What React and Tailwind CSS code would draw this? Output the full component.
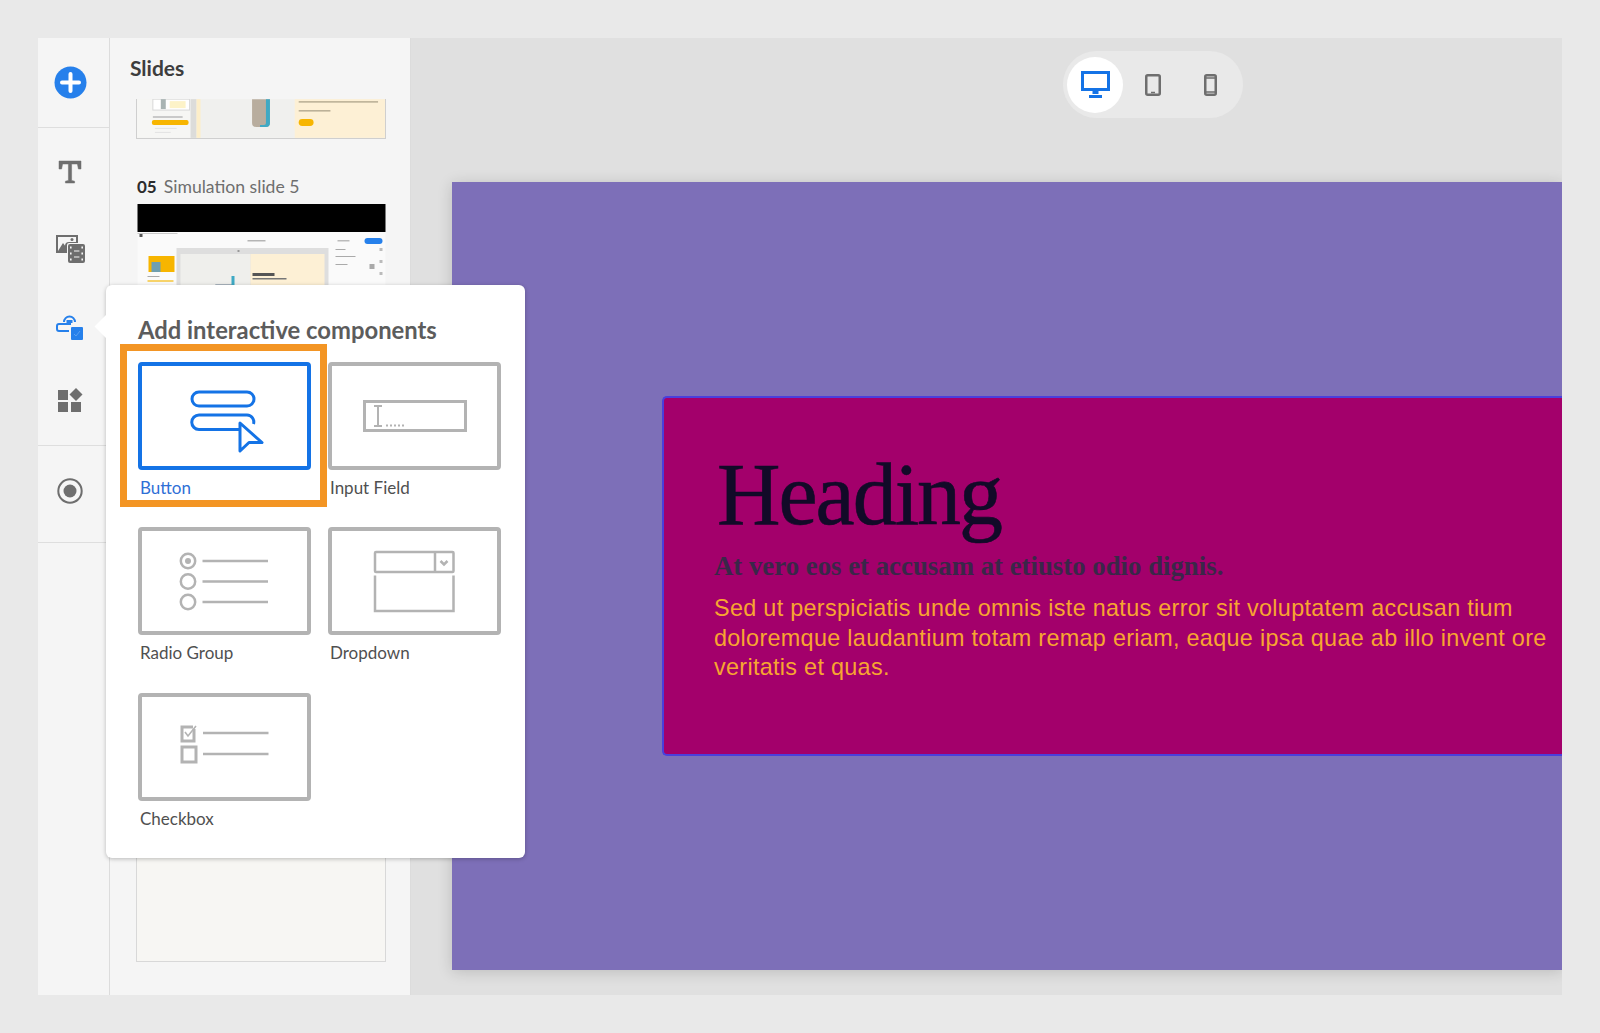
// Interactive components picker over the slide editor

import { useState } from 'react'

const uiFont = 'font-["Lato","Noto_Sans",sans-serif]'

function Thumb1() {
  return (
    <svg viewBox="0 0 250 39" className="block w-full h-full">
      <rect width="250" height="39" fill="#f0f0ee" />
      <rect width="54" height="39" fill="#f6f6f4" />
      <rect x="54" width="6" height="39" fill="#dcdcda" />
      <rect x="60" width="4" height="39" fill="#fdeec9" />
      <rect x="159" width="91" height="39" fill="#fdf0d5" />
      <rect x="16" y="0" width="37" height="11" fill="#fff" stroke="#d8d8d8" />
      <rect x="24" y="0" width="5" height="10" fill="#a9b4b4" />
      <rect x="33" y="2" width="16" height="7" fill="#fdf3c8" />
      <rect x="16" y="17" width="30" height="2" fill="#c9c9c9" />
      <rect x="15" y="21" width="37" height="5" rx="2" fill="#f7b500" />
      <rect x="18" y="29" width="22" height="1" fill="#e2e2e2" />
      <rect x="18" y="33" width="16" height="1" fill="#e2e2e2" />
      <path d="M116 0h18v24a4 4 0 0 1-4 4h-10a4 4 0 0 1-4-4z" fill="#b8ad9e" />
      <path d="M130 0h4v24a4 4 0 0 1-4 4h-6v-2h4a2 2 0 0 0 2-2z" fill="#3fa9c4" />
      <rect x="163" y="2" width="80" height="1.5" fill="#b8ad94" />
      <rect x="163" y="11" width="32" height="1.5" fill="#b8ad94" />
      <rect x="163" y="20" width="15" height="7" rx="3.5" fill="#f7b500" />
    </svg>
  )
}

function Thumb2() {
  return (
    <svg viewBox="0 0 248 120" className="block w-full h-full">
      <rect width="248" height="120" fill="#fafafa" />
      <rect width="248" height="28" fill="#000" />
      <rect y="29" width="40" height="1" fill="#c9c9c9" />
      <rect x="2" y="30" width="3" height="3" fill="#555" />
      <rect x="110" y="36" width="18" height="1.5" fill="#b5b5b5" />
      <rect x="200" y="36" width="12" height="1.5" fill="#bbb" />
      <rect x="227" y="34" width="18" height="6" rx="3" fill="#2680eb" />
      <rect x="39" y="44" width="152" height="76" fill="#dedede" />
      <rect x="43" y="50" width="70" height="70" fill="#efefec" />
      <rect x="113" y="50" width="74" height="70" fill="#fdf0d5" />
      <rect x="100" y="46" width="2" height="2" fill="#999" />
      <rect x="11" y="52" width="26" height="16" fill="#f7b500" />
      <rect x="14" y="58" width="9" height="10" fill="#6f9fb0" />
      <rect x="10" y="72" width="12" height="1" fill="#aaa" />
      <rect x="10" y="76" width="26" height="2" fill="#f7d36a" />
      <path d="M78 80h18v40H62z" fill="#a9b4bd" />
      <rect x="94" y="72" width="3" height="48" fill="#3fa9c4" />
      <rect x="115" y="69" width="22" height="3" fill="#555" />
      <rect x="115" y="74" width="34" height="1.5" fill="#777" />
      <rect x="198" y="45" width="10" height="1" fill="#aaa" />
      <rect x="198" y="52" width="20" height="1" fill="#aaa" />
      <rect x="198" y="60" width="12" height="1" fill="#aaa" />
      <rect x="232" y="60" width="5" height="5" fill="#aaa" />
      <rect x="242" y="44" width="3" height="3" fill="#bbb" />
      <rect x="242" y="56" width="3" height="3" fill="#bbb" />
      <rect x="242" y="68" width="3" height="3" fill="#bbb" />
    </svg>
  )
}

function RailIcon({ children, className }) {
  return <div className={`flex items-center justify-center pr-[7px] ${className}`}>{children}</div>
}

function Rail() {
  return (
    <div className="w-[72px] shrink-0 bg-[#f5f5f5] border-r border-[#dcdcdc] flex flex-col">
      <RailIcon className="h-[90px] border-b border-[#dedede]">
        <svg width="33" height="33" viewBox="0 0 33 33" className="-mt-[1px]">
          <circle cx="16.5" cy="16.5" r="16" fill="#2680eb" />
          <path d="M16.5 8v17M8 16.5h17" stroke="#fff" strokeWidth="4" strokeLinecap="round" />
        </svg>
      </RailIcon>
      <RailIcon className="h-[318px] flex-col justify-start border-b border-[#dedede]">
        <svg width="24" height="24" viewBox="0 0 24 24" className="mt-[32px]" fill="#6e6e6e">
          <path d="M1 1h22v8h-2.6l-1-5H13.6v16.4l3 .8V23H7.4v-1.8l3-.8V4H4.6l-1 5H1z" stroke="#6e6e6e" strokeWidth="0.5" />
        </svg>
        <svg width="29" height="28" viewBox="0 0 29 28" className="mt-[51px]">
          <path d="M0 0h22v8h-9a2 2 0 0 0-2 2v8H0z" fill="#6e6e6e" />
          <path d="M2 2h18v5h-7a4 4 0 0 0-4 4v5H2z" fill="#f5f5f5" />
          <path d="M2 16l5-8 3 4v4z" fill="#6e6e6e" />
          <circle cx="16" cy="4.6" r="1.5" fill="#6e6e6e" />
          <rect x="12" y="9" width="17" height="19" rx="2" fill="#6e6e6e" />
          <path d="M14 11.5h1.6v2H14zM25.4 11.5H27v2h-1.6zM14 17.5h1.6v2H14zM25.4 17.5H27v2h-1.6zM14 23.5h1.6v2H14zM25.4 23.5H27v2h-1.6z" fill="#f5f5f5" />
          <path d="M18 15.4h5.4v1H18zM18 21.4h5.4v1H18z" fill="#f5f5f5" />
        </svg>
        <svg width="27" height="26" viewBox="0 0 27 26" className="mt-[51px] -ml-[2px]" fill="none">
          <path d="M8 8a5.5 5.5 0 0 1 11 0" stroke="#2680eb" strokeWidth="2" />
          <rect x="10.5" y="6" width="6" height="3" fill="#2680eb" />
          <path d="M15 10H3a2 2 0 0 0-2 2v3a2 2 0 0 0 2 2h10" stroke="#2680eb" strokeWidth="2" />
          <rect x="15" y="13" width="12" height="13" rx="1" fill="#2680eb" />
          <path d="M18 20l2 2 4-5" stroke="#5a9ff0" strokeWidth="1" />
        </svg>
        <svg width="25" height="25" viewBox="0 0 25 25" className="mt-[48px]" fill="#6e6e6e">
          <rect x="0" y="2" width="10" height="10" />
          <rect x="0" y="14" width="10" height="10" />
          <rect x="13" y="14" width="10" height="10" />
          <path d="M18 0l6.5 6.5L18 13l-6.5-6.5z" />
        </svg>
      </RailIcon>
      <RailIcon className="h-[97px] pb-[6px] border-b border-[#dedede]">
        <svg width="26" height="26" viewBox="0 0 26 26" fill="none">
          <circle cx="13" cy="13" r="11.7" stroke="#6e6e6e" strokeWidth="2" />
          <circle cx="13" cy="13" r="6.5" fill="#6e6e6e" />
        </svg>
      </RailIcon>
    </div>
  )
}

function SlidesPanel() {
  return (
    <div className={`w-[301px] shrink-0 bg-[#f5f5f5] border-r border-[#dcdcdc] flex flex-col overflow-hidden ${uiFont}`}>
      <div className="h-[61px] shrink-0 pl-[20px] pt-[14px] text-[21px] leading-[32px] font-bold text-[#3d3d3d]">Slides</div>
      <div className="h-[40px] shrink-0 ml-[26px] mr-[24px] border border-[#cfcfcf] border-t-0">
        <Thumb1 />
      </div>
      <div className="shrink-0 mt-[36px] ml-[27px] h-[29px] text-[17.6px] leading-[24px] text-[#6e6e6e]">
        <span className="font-bold text-[17px] text-[#2c2c2c] mr-[7px]">05</span>Simulation slide 5
      </div>
      <div className="h-[120px] shrink-0 ml-[27px] w-[249px]">
        <Thumb2 />
      </div>
      <div className="flex-1 mt-[102px] mb-[33px] ml-[26px] mr-[24px] bg-[#f7f6f3] border border-[#d8d8d8]" />
    </div>
  )
}

function DeviceSwitch() {
  const [device, setDevice] = useState('desktop')
  const color = (id) => (device === id ? '#1473e6' : '#6e6e6e')
  return (
    <div className="ml-[652px] w-[180px] h-[67px] shrink-0 rounded-full bg-[#e9e9e9] flex items-center pl-[4px]">
      <button onClick={() => setDevice('desktop')} className={`w-[56px] h-[56px] rounded-full flex items-center justify-center ${device === 'desktop' ? 'bg-white' : ''}`}>
        <svg width="29" height="27" viewBox="0 0 29 27" fill="none">
          <rect x="1.5" y="1.5" width="26" height="17" stroke={color('desktop')} strokeWidth="3" />
          <path d="M11.5 20v3h6v-3zM8 24h13v3H8z" fill={color('desktop')} />
        </svg>
      </button>
      <button onClick={() => setDevice('tablet')} className={`w-[56px] h-[56px] ml-[2px] rounded-full flex items-center justify-center ${device === 'tablet' ? 'bg-white' : ''}`}>
        <svg width="16" height="22" viewBox="0 0 16 22" fill="none">
          <rect x="1.25" y="1.25" width="13.5" height="19.5" rx="1.5" stroke={color('tablet')} strokeWidth="2.5" />
          <path d="M6 18.5h4" stroke={color('tablet')} strokeWidth="1.5" />
        </svg>
      </button>
      <button onClick={() => setDevice('phone')} className={`w-[56px] h-[56px] ml-[1px] rounded-full flex items-center justify-center ${device === 'phone' ? 'bg-white' : ''}`}>
        <svg width="13" height="22" viewBox="0 0 13 22" fill="none">
          <rect x="1.25" y="1.25" width="10.5" height="19.5" rx="1.5" stroke={color('phone')} strokeWidth="2.5" />
          <path d="M1 4h11M1 18h11" stroke={color('phone')} strokeWidth="1.5" />
        </svg>
      </button>
    </div>
  )
}

function Canvas() {
  return (
    <div className="flex-1 min-w-0 bg-[#e0e0e0] flex flex-col pt-[13px] overflow-hidden">
      <DeviceSwitch />
      <div className="flex-1 ml-[41px] mt-[64px] mb-[25px] -mr-px bg-[#7d6fb8] shadow-[0_2px_14px_rgba(0,0,0,0.16)] flex items-center pl-[210px]">
        <div className="w-full h-[360px] bg-[#a3006b] border-2 border-r-0 border-[#4a3fdc] rounded-l-[5px] pl-[53px] pt-[48px]">
          <h1 className='font-["Liberation_Serif",serif] text-[88px] leading-[98px] tracking-[-2px] text-[#120a28] [-webkit-text-stroke:0.6px_#120a28]'>Heading</h1>
          <p className='font-["Liberation_Serif",serif] font-bold text-[26.8px] leading-[32px] mt-[6px] -ml-[3px] text-[#3a2748]'>At vero eos et accusam at etiusto odio dignis.</p>
          <p className='font-["Liberation_Sans",sans-serif] text-[23.4px] leading-[29.6px] tracking-[0.3px] mt-[12px] -ml-[3px] text-[#f7a531] w-[850px]'>
            Sed ut perspiciatis unde omnis iste natus error sit voluptatem accusan tium doloremque laudantium totam remap eriam, eaque ipsa quae ab illo invent ore veritatis et quas.
          </p>
        </div>
      </div>
    </div>
  )
}

const ComponentCard = ({ label, active, children }) => (
  <div>
    <div className={`w-[173px] h-[108px] bg-white border-4 rounded-[4px] ${active ? 'border-[#1473e6]' : 'border-[#b3b3b3]'}`}>
      {children}
    </div>
    <div className={`mt-[8px] pl-[2px] text-[17px] leading-[20px] ${active ? 'text-[#2f6fd6]' : 'text-[#505050]'}`}>{label}</div>
  </div>
)

const art = 'block w-full h-full'

function Popover() {
  return (
    <div className={`absolute left-[68px] top-[247px] w-[419px] h-[573px] bg-white rounded-[6px] shadow-[0_1px_4px_rgba(0,0,0,0.25)] pl-[32px] ${uiFont}`}>
      <div className="absolute -left-[8px] top-[33px] w-[17px] h-[17px] rotate-45 bg-white" />
      <h2 className="pt-[27px] h-[77px] text-[23.8px] leading-[36px] font-bold text-[#5c5c5c]">Add interactive components</h2>
      <div className="grid grid-cols-[173px_173px] gap-x-[17px] auto-rows-[165.4px]">
        <ComponentCard label="Button" active>
          <svg viewBox="1 1 165 100" className={art} fill="none" stroke="#1473e6" strokeWidth="3">
            <rect x="51" y="27" width="62" height="14" rx="7" />
            <path d="M99 64.5H58a7 7 0 0 1 0-14.5h48a7 7 0 0 1 6.5 9" />
            <path d="M99 58l22 19.5h-13L99 86z" fill="#fff" strokeLinejoin="round" />
          </svg>
        </ComponentCard>
        <ComponentCard label="Input Field">
          <svg viewBox="1 1 165 100" className={art} fill="none" stroke="#b3b3b3">
            <rect x="33.5" y="36.5" width="101" height="29" strokeWidth="3" />
            <path d="M43 41h8M47 41v20M43 61h8" strokeWidth="2" />
            <path d="M55 60.5h19" strokeWidth="2" strokeDasharray="2 2" />
          </svg>
        </ComponentCard>
        <ComponentCard label="Radio Group">
          <svg viewBox="1 1 165 100" className={art} fill="none" stroke="#b3b3b3" strokeWidth="2.5">
            <circle cx="47" cy="31" r="7.2" />
            <circle cx="47" cy="31" r="3" fill="#b3b3b3" stroke="none" />
            <circle cx="47" cy="51.5" r="7.2" />
            <circle cx="47" cy="72" r="7.2" />
            <path d="M61.5 31H127M61.5 51.5H127M61.5 72H127" />
          </svg>
        </ComponentCard>
        <ComponentCard label="Dropdown">
          <svg viewBox="1 1 165 100" className={art} fill="none" stroke="#b3b3b3" strokeWidth="2.5">
            <rect x="44" y="22" width="78.5" height="20" rx="1" />
            <path d="M104 22v20M109.5 31l3.5 3.5 3.5-3.5" />
            <path d="M44 45.5V81h78.5V45.5" />
          </svg>
        </ComponentCard>
        <ComponentCard label="Checkbox">
          <svg viewBox="1 1 165 100" className={art} fill="none" stroke="#b3b3b3" strokeWidth="3">
            <path d="M53 33v12H41V31h11" />
            <path d="M44 36l3 4 8-10" strokeWidth="1.6" />
            <rect x="41" y="51" width="14" height="15" />
            <path d="M62 37h65.5M62 58h65.5" strokeWidth="2.5" />
          </svg>
        </ComponentCard>
      </div>
      <div className="absolute left-[14px] top-[59px] w-[207px] h-[163px] border-[7px] border-[#f39524]" />
    </div>
  )
}

export default function App() {
  return (
    <div className="relative w-[1600px] h-[1033px] bg-[#e9e9e9] pt-[38px] pb-[38px] pl-[38px] pr-[38px] overflow-hidden">
      <div className="flex h-[957px] relative">
        <Rail />
        <SlidesPanel />
        <Canvas />
        <Popover />
      </div>
    </div>
  )
}
